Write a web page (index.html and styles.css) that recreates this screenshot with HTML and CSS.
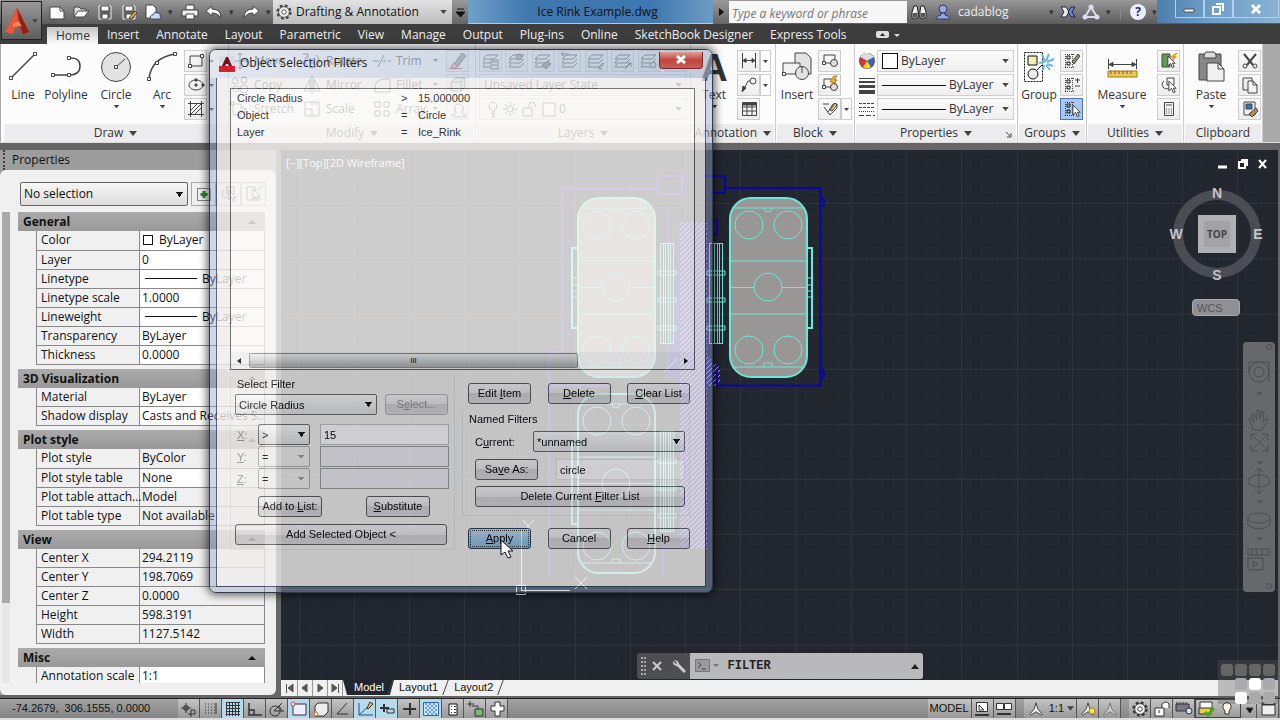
FILE: index.html
```
<!DOCTYPE html>
<html lang="en">
<head>
<meta charset="utf-8">
<title>Ice Rink Example.dwg</title>
<link rel="stylesheet" href="styles.css">
</head>
<body>
<svg class="defs" aria-hidden="true">
  <defs>
    <symbol id="dd" viewBox="0 0 8 5"><path d="M0 0h8L4 5z" fill="#444"/></symbol>
    <symbol id="rect" viewBox="0 0 20 20"><path d="M4 5h12v10H4z"/><path d="M2.500 13.500h3v3h-3zM14.500 3.500h3v3h-3z" fill="#fff"/></symbol>
    <symbol id="ellipse" viewBox="0 0 20 20"><ellipse cx="10" cy="10" rx="7" ry="5"/><path d="M9 9h2v2H9zM16 9h2v2h-2zM9 4h2v2H9z" fill="#444"/></symbol>
    <symbol id="hatch" viewBox="0 0 20 20"><path d="M2 4.500h16M4.500 2v16M2 15.500h16M15.500 2v16M5 11l6-6M5 15L15 5M9 15l6-6"/></symbol>
    <symbol id="move" viewBox="0 0 20 20"><path d="M10 2v16M2 10h16M8 4l2-2 2 2M8 16l2 2 2-2M4 8l-2 2 2 2M16 8l2 2-2 2"/></symbol>
    <symbol id="rotate" viewBox="0 0 20 20"><path d="M6 4a7 7 0 1 0 8 0M6 8V3h-5M9 9h3v3H9z"/></symbol>
    <symbol id="trim" viewBox="0 0 20 20"><path d="M1 10h6M11 10h3M16 10h3M6 16l6-12" stroke="#345"/></symbol>
    <symbol id="copy2" viewBox="0 0 20 20"><circle cx="5" cy="6" r="3"/><circle cx="14" cy="5" r="3"/><circle cx="6" cy="14" r="3"/><circle cx="14" cy="14" r="4"/></symbol>
    <symbol id="mirror" viewBox="0 0 20 20"><path d="M8 4v12H2zM12 4v12h6zM10 1v18"/></symbol>
    <symbol id="fillet" viewBox="0 0 20 20"><path d="M3 17V12Q4 4 13 4h5v13M3 17h15"/></symbol>
    <symbol id="stretch" viewBox="0 0 20 20"><path d="M3 5h8v11H3zM11 8l6 2-6 4M1 3h3v3H1z"/></symbol>
    <symbol id="scale" viewBox="0 0 20 20"><path d="M3 3h14v14H3zM3 10h7v7M10 3v3M14 3v3"/></symbol>
    <symbol id="array" viewBox="0 0 20 20"><path d="M3 3h5v5H3zM12 3h5v5h-5zM3 12h5v5H3zM12 12h5v5h-5z"/></symbol>
    <symbol id="layers" viewBox="0 0 20 20"><path d="M6 4h11l-4 4H2zM4 9l-2 3h11l4-4M4 13l-2 3h11l4-4"/></symbol>
    <symbol id="box" viewBox="0 0 20 20"><path d="M3 7h10v9H3zM3 7l4-4h10v9l-4 4M13 7l4-4" fill="#cde"/></symbol>
    <symbol id="offset" viewBox="0 0 20 20"><path d="M2 16h5q2-2 0-5-1-6 4-6t4 6q-2 3 0 5h4M5 18h14"/></symbol>
    <symbol id="erase" viewBox="0 0 20 20"><path d="M6 13L14 2l4 3-8 10z" fill="#8a8a90"/><path d="M6 12l-3 4 3 2 4-3z" fill="#e8b0a8"/><path d="M1 17.500h13" stroke="#a33"/></symbol>
    <symbol id="dim" viewBox="0 0 20 20"><path d="M3.500 2v15M16.500 2v15M4 9.500h12M4 9.500l3-2v4zM16 9.500l-3-2v4z" fill="#444"/></symbol>
    <symbol id="leader" viewBox="0 0 20 20"><circle cx="14" cy="6" r="3"/><path d="M11 6H9L4 16"/><path d="M3 17l1-6 3 2z" fill="#444"/></symbol>
    <symbol id="table" viewBox="0 0 20 20"><path d="M3.500 3.500h14v13h-14zM4 8h13M4 12h13M8 4v12M13 4v12"/><path d="M4 4h13v2H4z" fill="#444"/></symbol>
    <symbol id="edit" viewBox="0 0 20 20"><path d="M4 4h11v6M4 4v8h7" /><circle cx="14" cy="12" r="3.500" fill="#ddd"/><path d="M2.500 10.500h3v3h-3z" fill="#fff"/></symbol>
    <symbol id="attr" viewBox="0 0 20 20"><path d="M3 5h6M4 8l6 8 7-7V5l-4 0-5 8"/><path d="M10 11l5-7 2 2-5 6z" fill="#eec96b"/></symbol>
    <symbol id="arrow" viewBox="0 0 10 14"><path d="M1 1v11l3-3 2 5 2-1-2-4h3z" fill="#fff" stroke="#333"/></symbol>
    <symbol id="gear" viewBox="0 0 20 20"><circle cx="10" cy="10" r="7" stroke-dasharray="3 2.500" stroke-width="3"/><circle cx="10" cy="10" r="6" fill="#eee"/><circle cx="10" cy="10" r="2.500" fill="#fff"/></symbol>
    <symbol id="cursorgrp" viewBox="0 0 20 20"><path d="M3 3.500h9M3 16.500h9M3.500 3v14M10.500 3v14" stroke-dasharray="1 1"/><path d="M5 5h3v3H5zM5 11h3v3H5z" stroke="#111"/></symbol>
    <symbol id="man" viewBox="0 0 20 20"><path d="M10 3l2 7 5 6-1 1-6-4-6 4-1-1 5-6z" fill="#f4f4f4" stroke="#333"/></symbol>
    <symbol id="page" viewBox="0 0 20 20"><path d="M3 3h9v12H3z" fill="#eee"/><path d="M8 6h5l4 4v8H8zM13 6v4h4" fill="#f4f4f4"/></symbol>
  </defs>
</svg>
<div class="app">
  <header class="titlebar">
    <button class="appbtn" aria-label="Application menu"><svg width="24" height="26" viewBox="0 0 24 26"><path d="M12 0L0 24l8 2 4-9 6 9 6-2z" fill="#c2341d"/><path d="M12 0L0 24l8 2 5-14z" fill="#e4593a"/><path d="M12 0l6 26 6-2z" fill="#8f1f12"/><path d="M8 16l5-3 4 5-9 1z" fill="#f0845f"/></svg><svg class="dd" width="6" height="4"><use href="#dd"/></svg></button>
    <nav class="qat">
      <button aria-label="New"><svg viewBox="0 0 18 18"><path d="M2 4h10l4 4v8H2z" fill="#fff"/><path d="M12 4v4h4"/></svg></button>
      <button aria-label="Open"><svg viewBox="0 0 18 18"><path d="M2 14V4h5l2 2h5v3" fill="#ddd"/><path d="M2 14l4-6h11l-5 6z" fill="#fff"/></svg></button>
      <button aria-label="Save"><svg viewBox="0 0 18 18"><path d="M3 3h12v13H3z" fill="#666" stroke="#eee"/><path d="M5 3h8v5H5zM6 11h6v5H6z" fill="#fff"/></svg></button>
      <button aria-label="Save as"><svg viewBox="0 0 18 18"><path d="M3 3h12v13H3z" fill="#666" stroke="#eee"/><path d="M5 3h8v5H5zM6 11h6v5H6z" fill="#fff"/><path d="M9 15l6-7 2 2-6 6z" fill="#e7a93c"/></svg></button>
      <button aria-label="Cloud"><svg viewBox="0 0 18 18"><path d="M2 2h7l3 3v10H2z" fill="#fff"/><path d="M7 16q-2-4 2-4 1-4 4-2 4 0 3 3 2 3-2 3z" fill="#cfe0f4" stroke="#447"/></svg></button>
      <i>▾</i>
      <button aria-label="Print"><svg viewBox="0 0 18 18"><path d="M5 2h8v5H5z" fill="#fff"/><path d="M1 7h16v6H1z" fill="#eee"/><path d="M5 11h8v5H5z" fill="#fff"/></svg></button>
      <button aria-label="Undo"><svg viewBox="0 0 18 18"><path d="M1 8l6-5v3q9 0 9 9-3-5-9-5v3z" fill="#fff"/></svg></button>
      <i>▾</i>
      <button aria-label="Redo"><svg viewBox="0 0 18 18"><path d="M17 8l-6-5v3q-9 0-9 9 3-5 9-5v3z" fill="#fff"/></svg></button>
      <i>▾</i>
    </nav>
    <button class="workspace"><svg class="ic" width="18" height="18"><use href="#gear"/></svg><span>Drafting &amp; Annotation</span><svg width="7" height="4"><use href="#dd"/></svg></button>
    <button class="qmore" aria-label="Customize"><svg width="9" height="9" viewBox="0 0 9 9"><path d="M1 1h7M0 4h9L4.500 9z" stroke="#111" fill="#111"/></svg></button>
    <h1 class="doc">Ice Rink Example.dwg</h1>
    <button class="qmore" aria-label="Expand search"><svg width="5" height="8" viewBox="0 0 5 8"><path d="M0 0l5 4-5 4z" fill="#111"/></svg></button>
    <input class="search" aria-label="Search" placeholder="Type a keyword or phrase">
    <div class="account">
      <svg width="18" height="18" viewBox="0 0 18 18"><path d="M2 15V9l2-6h3l1 5v7zM10 15V8l1-5h3l2 6v6z" fill="#eee" stroke="#222"/><path d="M3 10h4v4H3zM11 10h4v4h-4z" fill="#555"/></svg>
      <svg width="18" height="18" viewBox="0 0 18 18"><circle cx="9" cy="6" r="4" fill="#9aa7e0" stroke="#2d3676"/><path d="M2 16q0-3 5-4v-2h4v2q5 1 5 4z" fill="#9aa7e0" stroke="#2d3676"/></svg>
      <span>cadablog</span><i>▾</i>
      <svg width="16" height="16" viewBox="0 0 16 16"><path d="M1 3h5l3 5-3 5H1l3-5z" fill="#eee" stroke="#224"/><path d="M15 3h-4L8 8l3 5h4l-3-5z" fill="#6f7fd0" stroke="#224"/></svg>
      <svg width="18" height="18" viewBox="0 0 18 18"><path d="M9 4l6 10H3z" fill="none" stroke="#dde" stroke-width="2"/><circle cx="9" cy="4" r="2.500" fill="#dde"/><circle cx="3" cy="14" r="2.500" fill="#dde"/><circle cx="15" cy="14" r="2.500" fill="#dde"/></svg>
      <i>▾</i><b class="sep"></b>
      <button class="help">?</button><i>▾</i>
    </div>
    <div class="winbtns">
      <button aria-label="Minimize"><svg width="12" height="12" viewBox="0 0 12 12"><path d="M1 6h10v3H1z" fill="#fff" stroke="#456"/></svg></button>
      <button aria-label="Restore"><svg width="12" height="12" viewBox="0 0 12 12"><path d="M4 1h7v7M1 4h7v7H1z" fill="none" stroke="#fff" stroke-width="2"/></svg></button>
      <button class="wide" aria-label="Close"><svg width="12" height="12" viewBox="0 0 12 12"><path d="M2 2l8 8M10 2l-8 8" stroke="#fff" stroke-width="3"/></svg></button>
    </div>
  </header>
  <nav class="tabs">
    <button class="on">Home</button><button>Insert</button><button>Annotate</button><button>Layout</button><button>Parametric</button><button>View</button><button>Manage</button><button>Output</button><button>Plug-ins</button><button>Online</button><button>SketchBook Designer</button><button>Express Tools</button>
    <button class="mini" aria-label="Minimize ribbon"><svg width="26" height="8" viewBox="0 0 26 8"><rect width="13" height="7" rx="2" fill="#ddd"/><path d="M4 5l2.500-3L9 5z" fill="#222"/><path d="M18 3h6l-3 3z" fill="#ddd"/></svg></button>
  </nav>
  <div class="ribbon">
    <section class="panel draw">
      <div class="body">
        <button class="big w40"><svg width="30" height="32" viewBox="0 0 30 32"><path d="M3 28L27 4" stroke-width="1.500"/><path d="M1.500 26.500h3v3h-3zM25.500 2.500h3v3h-3z" fill="#fff"/></svg>Line</button>
        <button class="big w46"><svg width="32" height="32" viewBox="0 0 32 32"><path d="M2 25h17M19 8q11-1 11 8t-11 9" stroke-width="1.500"/><path d="M1.500 23.500h3v3h-3zM17.500 23.500h3v3h-3zM17.500 6.500h3v3h-3z" fill="#fff"/></svg>Polyline</button>
        <button class="big w54"><svg width="32" height="32" viewBox="0 0 32 32"><circle cx="16" cy="17" r="14.500" fill="#e2e2e2"/><path d="M16 17l9-8"/><path d="M14.500 15.500h3v3h-3z" fill="#fff"/></svg>Circle<svg class="dd" width="5" height="3"><use href="#dd"/></svg></button>
        <button class="big w38"><svg width="32" height="32" viewBox="0 0 32 32"><path d="M3 29Q5 8 29 4" stroke-width="1.500"/><path d="M1.500 27.500h3v3h-3zM9.500 11.500h3v3h-3zM27.500 2.500h3v3h-3z" fill="#fff"/></svg>Arc<svg class="dd" width="5" height="3"><use href="#dd"/></svg></button>
        <div class="col m3">
          <div class="row"><button class="sm" aria-label="Rectangle"><svg><use href="#rect"/></svg></button><svg class="dd" width="5" height="3"><use href="#dd"/></svg></div>
          <div class="row"><button class="sm" aria-label="Ellipse"><svg><use href="#ellipse"/></svg></button><svg class="dd" width="5" height="3"><use href="#dd"/></svg></div>
          <div class="row"><button class="sm" aria-label="Hatch"><svg><use href="#hatch"/></svg></button><svg class="dd" width="5" height="3"><use href="#dd"/></svg></div>
        </div>
      </div>
      <button class="cap">Draw <svg width="8" height="5"><use href="#dd"/></svg></button>
    </section>
    <section class="panel modify">
      <div class="body">
        <div class="grid3">
          <button><svg><use href="#move"/></svg>Move</button><button><svg><use href="#rotate"/></svg>Rotate</button><button><svg><use href="#trim"/></svg>Trim</button>
          <button><svg><use href="#copy2"/></svg>Copy</button><button><svg><use href="#mirror"/></svg>Mirror</button><button><svg><use href="#fillet"/></svg>Fillet</button>
          <button><svg><use href="#stretch"/></svg>Stretch</button><button><svg><use href="#scale"/></svg>Scale</button><button><svg><use href="#array"/></svg>Array</button>
        </div>
        <div class="col dds"><svg class="dd" width="5" height="3"><use href="#dd"/></svg><svg class="dd" width="5" height="3"><use href="#dd"/></svg><svg class="dd" width="5" height="3"><use href="#dd"/></svg></div>
        <div class="col"><button class="sm" aria-label="Erase"><svg><use href="#erase"/></svg></button><button class="sm" aria-label="Explode"><svg><use href="#box"/></svg></button><button class="sm" aria-label="Offset"><svg><use href="#offset"/></svg></button></div>
      </div>
      <button class="cap">Modify <svg width="8" height="5"><use href="#dd"/></svg></button>
    </section>
    <section class="panel layers">
      <div class="body col">
        <div class="row spread">
          <button class="sm" aria-label="Layer properties"><svg><use href="#layers"/><path d="M10 9h7v9h-7zM11 11h5M11 14h5" fill="#eee"/></svg></button>
          <button class="sm" aria-label="Make current"><svg><use href="#layers"/><circle cx="12" cy="6" r="3" fill="#79b"/></svg></button>
          <button class="sm" aria-label="Match"><svg><use href="#layers"/><path d="M9 14l6-4 3 3-5 5z" fill="#876"/></svg></button>
          <button class="sm" aria-label="Previous"><svg><use href="#layers"/><path d="M1 3h8M1 3l3-2M1 3l3 2"/></svg></button>
          <button class="sm" aria-label="Isolate"><svg><use href="#layers"/><path d="M18 12l-5 6M13 15v3h3"/></svg></button>
          <button class="sm" aria-label="Unisolate"><svg><use href="#layers"/><path d="M12 18l6-6M14 12h4v4"/></svg></button>
          <button class="sm" aria-label="Freeze"><svg><use href="#layers"/><circle cx="14" cy="14" r="3" fill="#ddd"/></svg></button>
          <button class="sm" aria-label="Off"><svg><use href="#layers"/></svg></button>
        </div>
        <button class="combo">Unsaved Layer State<svg width="7" height="4"><use href="#dd"/></svg></button>
        <button class="combo l3"><svg class="ic" width="72" height="20" viewBox="0 0 72 20"><path d="M8 16v-4q-4-3-3-6 4-6 8 0 1 3-3 6v4zM8 18h3"/><circle cx="26" cy="10" r="3"/><path d="M26 3v3M26 14v3M19 10h3M30 10h3M21 5l2 2M31 5l-2 2M21 15l2-2M31 15l-2-2M39 9h9v8h-9zM45 9V5q3-4 6 0v3"/><rect x="59" y="4" width="12" height="13" fill="#fff"/></svg><span>0</span><svg width="7" height="4"><use href="#dd"/></svg></button>
      </div>
      <button class="cap">Layers <svg width="8" height="5"><use href="#dd"/></svg></button>
    </section>
    <section class="panel annot">
      <div class="body">
        <button class="big w46 bigA"><b>A</b>Text<svg class="dd" width="5" height="3"><use href="#dd"/></svg></button>
        <div class="col">
          <div class="row"><button class="sm" aria-label="Dimension"><svg><use href="#dim"/></svg></button><button class="drop" aria-label="More"><svg class="dd" width="5" height="3"><use href="#dd"/></svg></button></div>
          <div class="row"><button class="sm" aria-label="Leader"><svg><use href="#leader"/></svg></button><button class="drop" aria-label="More"><svg class="dd" width="5" height="3"><use href="#dd"/></svg></button></div>
          <button class="sm" aria-label="Table"><svg><use href="#table"/></svg></button>
        </div>
      </div>
      <button class="cap">Annotation <svg width="8" height="5"><use href="#dd"/></svg></button>
    </section>
    <section class="panel block">
      <div class="body">
        <button class="big w42"><svg width="32" height="32" viewBox="0 0 32 32"><path d="M14 3h11l5 5v16H14z" fill="#e2e2e2"/><path d="M2 13h17v11H2z" fill="#f2f2f2"/><circle cx="21" cy="23" r="6.500" fill="#e2e2e2"/><path d="M21 16v7M1.500 22.500h3v3h-3z" fill="#fff"/></svg>Insert</button>
        <div class="col"><button class="sm" aria-label="Create block"><svg><use href="#edit"/></svg></button><button class="sm" aria-label="Edit block"><svg><use href="#edit"/><path d="M14 1l-4 6h3l-2 4 6-6h-3l3-4z" fill="#f2b632" stroke="#b88010"/></svg></button><div class="row"><button class="sm" aria-label="Attributes"><svg><use href="#attr"/></svg></button><button class="drop" aria-label="More"><svg class="dd" width="5" height="3"><use href="#dd"/></svg></button></div></div>
      </div>
      <button class="cap">Block <svg width="8" height="5"><use href="#dd"/></svg></button>
    </section>
    <section class="panel props">
      <div class="body">
        <div class="col pics">
          <svg viewBox="0 0 16 22"><circle cx="8" cy="11" r="8" fill="#555" stroke="none"/><path d="M8 11L1 7q6-8 14 0z" fill="#ddd" stroke="none"/><path d="M8 11L1 7q-1 7 3 10z" fill="#d33" stroke="none"/><path d="M8 11l7-4q1 7-3 10z" fill="#36b" stroke="none"/><path d="M8 11l-4 6q4 3 8 0z" fill="#fc3" stroke="none"/></svg>
          <svg viewBox="0 0 16 22"><path d="M0 4.500h16"/><path d="M0 8h16" stroke-width="2"/><path d="M0 12.500h16" stroke-width="3"/><path d="M0 18h16" stroke-width="4"/></svg>
          <svg viewBox="0 0 16 22"><path d="M0 5.500h16M0 9.500h16" stroke-dasharray="3 1"/><path d="M0 13.500h16" stroke-dasharray="1 1"/><path d="M0 17.500h16" stroke-dasharray="5 2"/></svg>
        </div>
        <div class="col grow">
          <button class="combo"><u class="sw"></u><span>ByLayer</span><svg width="7" height="4"><use href="#dd"/></svg></button>
          <button class="combo"><u class="ln"></u><span>ByLayer</span><svg width="7" height="4"><use href="#dd"/></svg></button>
          <button class="combo"><u class="ln"></u><span>ByLayer</span><svg width="7" height="4"><use href="#dd"/></svg></button>
        </div>
      </div>
      <button class="cap">Properties <svg width="8" height="5"><use href="#dd"/></svg><svg class="launch" width="6" height="6" viewBox="0 0 6 6"><path d="M0 0l4 4M5 1v4H1" fill="none" stroke="#444"/></svg></button>
    </section>
    <section class="panel groups">
      <div class="body">
        <button class="big w42"><svg width="32" height="32" viewBox="0 0 32 32"><path d="M1.500 2.500h18v29h-18z" stroke="#111" stroke-dasharray="2 1"/><path d="M5 6h9v9H5z" fill="#f3efb0" stroke="#111"/><circle cx="10" cy="24" r="5" fill="#eee" stroke="#111"/><path d="M14 20l5-5" stroke="#111"/><path d="M22 12l-6 1M22 12l-3-8M23 11l3-7M24 12l7-3M24 14l6 2M23 15l4 5M21 15l-1 5" stroke="#6db4dc" stroke-width="2"/></svg>Group</button>
        <div class="col"><button class="sm" aria-label="Ungroup"><svg><use href="#cursorgrp"/><path d="M10 11l6-8 2 2-6 8z" fill="#897"/></svg></button><button class="sm" aria-label="Group edit"><svg><use href="#cursorgrp"/><path d="M13 5h5M15.500 3v5M13 11h5"/></svg></button><button class="sm sel" aria-label="Group selection"><svg><use href="#cursorgrp"/><use href="#arrow" x="10" y="5" width="9" height="13"/></svg></button></div>
      </div>
      <button class="cap">Groups <svg width="8" height="5"><use href="#dd"/></svg></button>
    </section>
    <section class="panel utils">
      <div class="body">
        <button class="big w70"><svg width="32" height="32" viewBox="0 0 32 32"><path d="M2.500 9v10M30.500 9v10M3 14.500h27M3 14.500l4-2v4zM30 14.500l-4-2v4z" fill="#333"/><path d="M2 21h29v6H2z" fill="#ecc94b" stroke="#9a7a1a"/><path d="M5 21v3M9 21v3M13 21v3M17 21v3M21 21v3M25 21v3" stroke="#654"/></svg>Measure<svg class="dd" width="5" height="3"><use href="#dd"/></svg></button>
        <div class="col"><button class="sm" aria-label="Quick select"><svg><path d="M3 3h8v13H3z" fill="#5c9e4e"/><path d="M18 2l-5 4h3l-3 4" stroke="#d9a51c" stroke-width="2"/><use href="#arrow" x="8" y="4" width="9" height="13"/></svg></button><button class="sm" aria-label="Select all"><svg><path d="M8 3h7v7H8zM5 6a4 4 0 1 0 5 7"/><use href="#arrow" x="9" y="5" width="9" height="13"/></svg></button><button class="sm" aria-label="Calculator"><svg><path d="M5.500 3.500h9v13h-9zM7 6h6M7 10h1M9.500 10h1M12 10h1M7 12h1M9.500 12h1M12 12h1M7 14h1M9.500 14h1M12 14h1"/></svg></button></div>
      </div>
      <button class="cap">Utilities <svg width="8" height="5"><use href="#dd"/></svg></button>
    </section>
    <section class="panel clip">
      <div class="body">
        <button class="big w54"><svg width="32" height="32" viewBox="0 0 32 32"><path d="M4 4h22v26H4z" fill="#888"/><path d="M9 5l2-3h8l2 3v3H9z" fill="#ddd"/><path d="M12 13h11l6 6v12H12z" fill="#f0f0f0"/><path d="M23 13v6h6"/></svg>Paste<svg class="dd" width="5" height="3"><use href="#dd"/></svg></button>
        <div class="col"><button class="sm" aria-label="Cut"><svg><path d="M4 3l9 11M16 3L7 14" stroke-width="2"/><circle cx="5" cy="15" r="2"/><circle cx="15" cy="15" r="2"/></svg></button><button class="sm" aria-label="Copy"><svg><use href="#page"/></svg></button><button class="sm" aria-label="Match"><svg><path d="M4 3h11v13H4z" fill="#eee"/><path d="M6 5h6v5H6z" fill="#37a"/><path d="M9 15l7-6 2 3-6 6z" fill="#b58a50"/></svg></button></div>
      </div>
      <button class="cap">Clipboard</button>
    </section>
  </div>
  <main class="work">
    <aside class="palette">
      <h2>Properties</h2>
      <div class="pbody">
        <div class="pick">
          <select aria-label="Selection"><option>No selection</option></select>
          <button aria-label="Pickadd"><svg viewBox="0 0 20 20"><path d="M3.500 4.500h13v12h-13z" stroke-dasharray="1 1" stroke="#111"/><path d="M10 7v7M6.500 10.500h7" stroke="#2a8a2a" stroke-width="3"/></svg></button><button aria-label="Select objects"><svg viewBox="0 0 20 20"><path d="M8 3h7v7H8zM5 6a4 4 0 1 0 5 7"/><use href="#arrow" x="9" y="5" width="9" height="13"/></svg></button><button aria-label="Quick select"><svg viewBox="0 0 20 20"><path d="M3 3h8v13H3zM18 2l-5 4"/><use href="#arrow" x="8" y="4" width="9" height="13"/></svg></button>
        </div>
        <div class="plist">
          <div class="pscroll"></div>
          <div class="psecs">
            <h3>General<i></i></h3>
            <table><tr><th>Color<td class="w"><u class="csw"></u>ByLayer<tr><th>Layer<td class="w">0<tr><th>Linetype<td class="w"><u class="pl"></u>ByLayer<tr><th>Linetype scale<td class="w">1.0000<tr><th>Lineweight<td class="w"><u class="pl"></u>ByLayer<tr><th>Transparency<td class="w">ByLayer<tr><th>Thickness<td class="w">0.0000</table>
            <h3>3D Visualization<i></i></h3>
            <table><tr><th>Material<td class="w">ByLayer<tr><th>Shadow display<td class="w">Casts and Receives S...</table>
            <h3>Plot style<i></i></h3>
            <table><tr><th>Plot style<td>ByColor<tr><th>Plot style table<td class="w">None<tr><th>Plot table attach...<td>Model<tr><th>Plot table type<td>Not available</table>
            <h3>View<i></i></h3>
            <table><tr><th>Center X<td>294.2119<tr><th>Center Y<td>198.7069<tr><th>Center Z<td>0.0000<tr><th>Height<td>598.3191<tr><th>Width<td>1127.5142</table>
            <h3>Misc<i></i></h3>
            <table><tr><th>Annotation scale<td class="w">1:1</table>
          </div>
        </div>
      </div>
    </aside>
    <div class="view">
      <div class="canvas">
        <svg class="drawing" width="997" height="530" viewBox="281 150 997 530">
          <defs>
            <pattern id="minor" x="299" y="203" width="11" height="11" patternUnits="userSpaceOnUse"><path d="M0 .5h11M.5 0v11" stroke="#242831"/></pattern>
            <pattern id="hat" width="5" height="5" patternUnits="userSpaceOnUse"><path d="M0 5l5-5" stroke="#b9b9c4"/></pattern>
            <g id="rink">
              <rect x="0" y="0" width="77" height="179" rx="21" stroke-width="2"/>
              <path d="M4 10h69M0 63h77M0 89.500h77M0 116h77M4 169h69M34 10a4 4 0 0 0 8 0M34 169v-4h8v4"/>
              <circle cx="19" cy="27" r="14"/><circle cx="58" cy="27" r="14"/><circle cx="38" cy="89" r="14"/><circle cx="19" cy="152" r="14"/><circle cx="58" cy="152" r="14"/>
            </g>
            <g id="seats"><path d="M.5 0v101M3.500 0v101M5.500 0v101M8.500 0v101M10.500 0v101M13.500 0v101M0 .5h14M0 100.500h14M-2 28h18v4h-18zM-2 55h18v4h-18zM-2 83h18v4h-18z"/></g>
          </defs>
          <rect x="281" y="150" width="997" height="530" fill="url(#minor)"/>
          <path d="M299.500 150v530M354.500 150v530M409.500 150v530M464.500 150v530M519.500 150v530M575.500 150v530M630.500 150v530M685.500 150v530M740.500 150v530M796.500 150v530M851.500 150v530M906.500 150v530M961.500 150v530M1017.500 150v530M1072.500 150v530M1127.500 150v530M1182.500 150v530M1237.500 150v530M281 203.500h997M281 258.500h997M281 314.500h997M281 369.500h997M281 424.500h997M281 479.500h997M281 534.500h997M281 645.500h997" stroke="#2e323a"/>
          <path d="M281 589.500h997" stroke="#4d293a"/>
          <path d="M680 222h27v134l13 12v18h-13v163h-27V385l-11-9z" fill="#21188f" stroke="none"/><path d="M680 222h27v134l13 12v18h-13v163h-27z" fill="url(#hat)"/>
          <path d="M562 352V188.500h96V176h24v18h-24M549 578V352h13M549 386h60M668 210v170M663 578v-30h17" fill="none" stroke="#3b20c8" stroke-width="2"/>
          <path d="M700 176h25v17h-15M725 188h95.500v197.500H717V372M711 220h6v14h-6M821 198q3 0 3 4t-3 5M821 369q3 1 3 5t-3 5" fill="none" stroke="#0a05a8" stroke-width="2"/>
          <g fill="none" stroke="#6ce8d8">
            <use href="#rink" x="578" y="198" fill="#999696"/><use href="#rink" x="730" y="198" fill="#999696"/><use href="#rink" x="578" y="394"/>
            <use href="#seats" x="660" y="243"/><use href="#seats" x="709" y="243"/><use href="#seats" x="660" y="431"/>
            <path d="M577 248h-5v80h5M807 248h5v80h-5M577 444h-5v80h5" stroke-width="2"/><path d="M572 278h5M572 285h5M572 291h5M572 297h5M807 278h5M807 285h5M807 291h5M807 297h5M664 372l14-14"/>
          </g>
          <path d="M521.500 590V530M521 590.500h49M516.500 585.500h9v9h-9zM523 520l5 6 6-6M528 526v5M575 577l12 12M587 577l-12 12" fill="none" stroke="#fff"/>
        </svg>
        <span class="vlabel">[−][Top][2D Wireframe]</span>
        <div class="mdi"><svg width="50" height="12" viewBox="0 0 50 12"><path d="M0 9h9" stroke="#fff" stroke-width="3"/><path d="M21 4h6v6h-6zM23 2h6v6" fill="none" stroke="#fff" stroke-width="2"/><path d="M41 2l7 8M48 2l-7 8" stroke="#fff" stroke-width="2"/></svg></div>
        <div class="cube"><span class="n">N</span><span class="w">W</span><button>TOP</button><span class="e">E</span><span class="s">S</span></div>
        <button class="wcs">WCS</button>
        <div class="navbar"><svg width="32" height="250" viewBox="0 0 32 250"><g fill="none" stroke="#4b4d51"><circle cx="26" cy="5" r="2.500"/><circle cx="16" cy="30" r="10"/><circle cx="16" cy="30" r="5"/><path d="M6 30V20h20v20M14 51h5l-2 2zM9 84l-3-7 2-1 3 4-2-8 2-1 3 7V68h2l1 9 2-8 2 1-1 10 4-4 1 2-6 10h-9zM8 92l17 17M25 92L8 109M8 98v-6h6M19 92h6v6M8 103v6h6M19 109h6v-6M14 120h5l-2 2zM16 126v26M12 130l4-4 4 4M12 148l4 4 4-4"/><ellipse cx="16" cy="139" rx="11" ry="6"/><path d="M14 159h5l-2 2z"/><ellipse cx="16" cy="176" rx="11" ry="5"/><path d="M5 176v7q11 8 22 0v-7M14 196h5l-2 2zM5 207h21v6H5zM9 207v6M14 207v6M19 207v6M5 216h15v12H5zM10 219l5 3-5 3z"/><circle cx="26" cy="244" r="2.500"/></g></svg></div>
        <div class="cmd">
          <span class="grip"></span>
          <button aria-label="Close"><svg width="12" height="12" viewBox="0 0 12 12"><path d="M2 2l8 8M10 2l-8 8" stroke="#ccc" stroke-width="2"/></svg></button>
          <button aria-label="Customize"><svg width="14" height="14" viewBox="0 0 14 14"><path d="M5 5l8 8" stroke="#ccc" stroke-width="3"/><path d="M2 1l3 3-1 1-3-3q-1 5 5 5 3-5-4-6z" fill="#ccc"/></svg></button>
          <label><svg width="24" height="14" viewBox="0 0 24 14"><path d="M.5 .5h14v12H.5z" fill="#9b9b9d" stroke="#777"/><path d="M3 3l3 3-3 3M7 10h4" stroke="#444" fill="none"/><path d="M18 5h6l-3 3z" fill="#777"/></svg><input aria-label="Command" value="FILTER"><svg width="8" height="5" viewBox="0 0 8 5"><path d="M0 5l4-5 4 5z" fill="#222"/></svg></label>
        </div>
      </div>
      <nav class="ltabs">
        <button class="nv" aria-label="First"><svg viewBox="0 0 10 10"><path d="M1.500 1v9M8 1v8L3 5z"/></svg></button><button class="nv" aria-label="Previous"><svg viewBox="0 0 10 10"><path d="M7 1v8L2 5z"/></svg></button><button class="nv" aria-label="Next"><svg viewBox="0 0 10 10"><path d="M3 1v8l5-4z"/></svg></button><button class="nv" aria-label="Last"><svg viewBox="0 0 10 10"><path d="M8.500 1v9M2 1v8l5-4z"/></svg></button>
        <button class="lt model">Model</button><button class="lt">Layout1</button><button class="lt">Layout2</button>
      </nav>
    </div>
  </main>
  <footer class="status">
    <output>-74.2679, &nbsp;306.1555, 0.0000</output>
    <div class="sbtns">
      <button aria-label="Infer"><svg viewBox="0 0 20 18"><path d="M2 8h10M7 3v10M5 6h4v4H5zM12 10h4v4h-4zM9 14h3v3"/></svg></button><button aria-label="Snap"><svg viewBox="0 0 20 18"><path d="M4 4h10M4 7h10M4 10h10M4 13h10" stroke-dasharray="1 2"/><path d="M15 3v11"/></svg></button><button class="on" aria-label="Grid"><svg viewBox="0 0 20 18"><path d="M3.500 2v14M6.500 2v14M9.500 2v14M12.500 2v14M15.500 2v14M3 2.500h14M3 5.500h14M3 8.500h14M3 11.500h14M3 14.500h14"/></svg></button><button aria-label="Ortho"><svg viewBox="0 0 20 18"><path d="M4 3v12h13M4 10h5v5" stroke-width="1.500"/></svg></button><button aria-label="Polar"><svg viewBox="0 0 20 18"><circle cx="8" cy="11" r="5"/><path d="M15 3l-8 8h10M12 6l3 5"/></svg></button><button class="on" aria-label="Osnap"><svg viewBox="0 0 20 18"><path d="M4 4h13v11H4z" fill="#eef"/><circle cx="4" cy="4" r="2" fill="#fff" stroke="#b44"/></svg></button><button aria-label="3D osnap"><svg viewBox="0 0 20 18"><path d="M4 6l3-3h10v9l-4 4H4z" fill="#eee"/><circle cx="5" cy="14" r="2" fill="#fff" stroke="#c62"/></svg></button><button aria-label="Otrack"><svg viewBox="0 0 20 18"><path d="M14 3L4 14h11"/></svg></button><button class="on" aria-label="Ducs"><svg viewBox="0 0 20 18"><path d="M4 3v12h14M4 15L14 6" stroke="#257"/><path d="M12 8l3-6 3 2-5 5z" fill="#eb4"/></svg></button><button class="on" aria-label="Dyn"><svg viewBox="0 0 20 18"><path d="M3 8h9M7 4v8" stroke-width="2"/><path d="M10 9h7v4h-7z"/></svg></button><button aria-label="Lineweight"><svg viewBox="0 0 20 18"><path d="M4 9h13" stroke-width="2"/><path d="M11 3v12" stroke-width="2"/></svg></button><button class="on" aria-label="Transparency"><svg viewBox="0 0 20 18"><path d="M2.500 2.500h15v13h-15z" fill="#cfe4f5" stroke="#36a"/><path d="M4 4h12M4 8h12M4 12h12" stroke="#6aa2d4" stroke-width="2" stroke-dasharray="2 2"/><path d="M6 6h10M6 10h10M6 14h10" stroke="#6aa2d4" stroke-width="2" stroke-dasharray="2 2"/></svg></button><button aria-label="Quick properties"><svg viewBox="0 0 20 18"><path d="M6 4h8v11H6z" fill="#fff" stroke="#111"/><path d="M8 6.500h1M11 6.500h2M8 9.500h1M11 9.500h2M8 12.500h1M11 12.500h2"/></svg></button><button aria-label="Cycling"><svg viewBox="0 0 20 18"><path d="M2 4h7M5 1v6M7 6h6v7" /><path d="M10 9h8v7h-8z" fill="#7db870"/></svg></button><button aria-label="Monitor"><svg viewBox="0 0 20 18"><path d="M8 2h5v4h4v5h-4v5H8v-5H4V6h4z" fill="#fff"/></svg></button>
    </div>
    <div class="sbtns right">
      <button class="txt">MODEL</button><button aria-label="Layout"><svg viewBox="0 0 20 18"><path d="M4.500 2.500h11v9h-11z" fill="#fff"/><path d="M7 5v5h5z"/><path d="M3 15h14" stroke-width="2"/></svg></button><button aria-label="Quick view"><svg viewBox="0 0 20 18"><path d="M2.500 3.500h7v6h-7zM10.500 3.500h7v6h-7z" fill="#fff"/><path d="M3 14h14" stroke-width="2"/></svg></button>
      <button class="txt g"><svg class="ic" viewBox="0 0 20 18"><use href="#man"/></svg>1:1<svg width="7" height="5"><use href="#dd"/></svg></button><button aria-label="Annotation visibility"><svg viewBox="0 0 20 18"><use href="#man"/><circle cx="14" cy="11" r="3" fill="#fd6" stroke="#a80"/></svg></button><button aria-label="Auto scale"><svg viewBox="0 0 20 18" opacity=".5"><use href="#man"/></svg></button>
      <button class="g" aria-label="Workspace"><svg viewBox="0 0 20 18"><use href="#gear"/></svg></button><button aria-label="Lock"><svg viewBox="0 0 20 18"><path d="M3 8h9v8H3zM10 8V4q4-4 7 0v4M7 10v3" fill="#fff"/></svg></button><button aria-label="Hardware"><svg viewBox="0 0 20 18"><path d="M2 4h13v7H2zM3 2v2M6 2v2M9 2v2M12 2v2" fill="#778"/><circle cx="15" cy="11" r="3" fill="#cdf"/></svg></button>
      <button class="tray" aria-label="Tray"><svg viewBox="0 0 44 18"><path d="M4 2h12v7H4z" fill="#fff"/><path d="M3 8h12v6H3z" fill="#ec4"/><path d="M9 12l3 3 6-7" stroke="#4a2" stroke-width="3"/><path d="M29 14v-3q-3-3-2-6 4-5 8 0 1 3-2 6v3z" fill="#ffd"/></svg></button><button class="slim" aria-label="Menu"><svg viewBox="0 0 10 18"><path d="M2 8h7l-3 5z" fill="#111"/></svg></button><button aria-label="Clean screen"><svg viewBox="0 0 20 18"><path d="M4 3h13v12H4z" fill="#eee"/><path d="M4 4h13" stroke-width="3"/></svg></button>
    </div>
  </footer>

  <div class="mark"><i></i><i></i><i></i><i></i><i class="x"></i><i class="b"></i><i class="c"></i><i class="b"></i><i class="x"></i><i class="c"></i><i class="b"></i><i class="b"></i></div>

  <div class="dialog" role="dialog" aria-label="Object Selection Filters">
    <div class="dtitle"><svg width="16" height="16" viewBox="0 0 16 16"><path d="M0 0h16v10H0z" fill="#d8dbe2"/><path d="M0 10h16v6H0z" fill="#d4202f"/><path d="M3 10l4-9h2l4 9h-3l-1-2H7l-1 2z" fill="#701018"/></svg><span>Object Selection Filters</span><button aria-label="Close"><svg width="10" height="9" viewBox="0 0 10 9"><path d="M1 1l8 7M9 1L1 8" stroke="#fff" stroke-width="3"/></svg></button></div>
    <div class="client">
      <div class="list">
        <table><tr><td>Circle Radius<td>&gt;<td>15.000000<tr><td>Object<td>=<td>Circle<tr><td>Layer<td>=<td>Ice_Rink</table>
        <div class="hs"><svg width="5" height="6" viewBox="0 0 5 6"><path d="M4 0v6L0 3z"/></svg><span>III</span><svg width="5" height="6" viewBox="0 0 5 6"><path d="M1 0v6l4-3z"/></svg></div>
      </div>
      <div class="cols">
        <div class="left">
          <label for="f">Select Filter</label>
          <div class="r a"><select id="f"><option>Circle Radius</option></select><button disabled>S<u>e</u>lect...</button></div>
          <div class="r v"><label for="x"><u>X</u>:</label><select id="x"><option>&gt;</option></select><input value="15" aria-label="X value"></div>
          <div class="r v dis"><label for="y"><u>Y</u>:</label><select id="y"><option>=</option></select><input aria-label="Y value"></div>
          <div class="r v dis"><label for="z"><u>Z</u>:</label><select id="z"><option>=</option></select><input aria-label="Z value"></div>
          <div class="r pair"><button>Add to <u>L</u>ist:</button><button><u>S</u>ubstitute</button></div>
          <button class="full">Add Selected Object &lt;</button>
        </div>
        <div class="rightc">
          <div class="r tri"><button>Edit <u>I</u>tem</button><button><u>D</u>elete</button><button><u>C</u>lear List</button></div>
          <div class="named">
            <span>Named Filters</span>
            <div class="r cur"><label for="c">C<u>u</u>rrent:</label><select id="c"><option>*unnamed</option></select></div>
            <div class="r sav"><button>Sa<u>v</u>e As:</button><input value="circle" aria-label="Filter name"></div>
            <button class="full">Delete Current <u>F</u>ilter List</button>
          </div>
          <div class="r tri"><button class="def"><u>A</u>pply</button><button>Cancel</button><button><u>H</u>elp</button></div>
        </div>
      </div>
    </div>
  </div>
  <svg class="pointer" width="13" height="20" viewBox="0 0 13 20"><path d="M1 1v15l4-3 3 6 3-1-3-6h5z" fill="#fff" stroke="#111"/></svg>
</div>
</body>
</html>
```
FILE: styles.css
```
*, *::before, *::after { box-sizing: border-box; }
body { margin: 0; font: 12px/16px "Open Sans", "Noto Sans", sans-serif; color: #333; }
button, input, select { font: inherit; color: inherit; margin: 0; padding: 0; border: 0; background: none; border-radius: 0; }
select { appearance: none; }
svg { display: block; flex: none; }
i { font-style: normal; }
.defs { position: absolute; width: 0; height: 0; }
.app { position: relative; display: flex; flex-direction: column; height: 100vh; min-height: 720px; background: #666; overflow: hidden; }

.titlebar { display: flex; height: 24px; background: linear-gradient(#989898, #5c5c5c); position: relative; }
.appbtn { position: absolute; left: 1px; top: 1px; width: 41px; height: 39px; display: flex; align-items: center; justify-content: center; gap: 3px; border: 1px solid #222; background: linear-gradient(#999, #5e5e5e); z-index: 2; }
.qat { display: flex; align-items: center; gap: 6px; width: 273px; padding-left: 48px; }
.qat svg { width: 18px; height: 18px; fill: none; stroke: #444; }
.qat i { width: 8px; font-size: 9px; color: #333; }
.workspace { display: flex; align-items: center; gap: 3px; width: 179px; padding: 0 5px 0 2px; background: linear-gradient(#e2e2e2, #bdbdbd); color: #111; }
.workspace span { flex: 1; text-align: left; white-space: nowrap; }
.ic { fill: none; stroke: #444; }
.qmore { width: 16px; display: flex; align-items: center; justify-content: center; background: linear-gradient(#999, #666); }
.doc { flex: 1; margin: 0; font-size: 12px; font-weight: 400; line-height: 24px; padding-left: 14px; text-align: center; color: #111; background: linear-gradient(90deg, #6fa0c8, #3f78ae 25%, #3e78b0 75%, #6c9cc4); border-bottom: 1px solid #a9cbe4; }
.search { width: 178px; height: 22px; margin-top: 1px; padding: 2px 3px 0; background: #f6f6f6; font-style: italic; }
.search::placeholder { color: #777; opacity: 1; }
.account { width: 250px; display: flex; align-items: center; padding-left: 3px; gap: 6px; color: #f0f0f0; }
.account span { flex: 1; }
.account i { font-size: 9px; color: #333; }
.sep { width: 1px; height: 14px; margin: 0 3px; background: #888; }
.help { width: 16px; height: 16px; border-radius: 8px; background: #eef; color: #236; font-weight: 700; line-height: 16px; }
.winbtns { display: flex; width: 123px; height: 23px; padding: 0 1px 5px 18px; background: linear-gradient(90deg, #4d7fac, #6c9cc6 40%, #88b2d4); }
.winbtns button { flex: 28; display: flex; align-items: center; justify-content: center; border: 1px solid #b5d0e6; border-top: 0; }
.winbtns .wide { flex: 46; }

.tabs { display: flex; height: 20px; background: #3d3d3d; padding-left: 47px; color: #eee; white-space: nowrap; }
.tabs button { padding: 2px 8px 0 9px; line-height: 18px; }
.tabs .on { background: linear-gradient(#c4c4c4, #fbfbfb); color: #333; margin-top: 3px; padding-top: 0; line-height: 17px; }
.tabs .mini { padding-left: 22px; }

.ribbon { display: flex; height: 99px; background: #aaa; padding-left: 1px; margin-bottom: 7px; border-bottom: 1px solid #ddd; }
.panel { display: flex; flex-direction: column; background: #fcfcfd; border-right: 1px solid #ccc; }
.body { flex: 1; display: flex; padding-top: 6px; }
.cap { display: flex; align-items: center; justify-content: center; gap: 6px; height: 18px; margin: 0 1px; background: #ececee; white-space: nowrap; position: relative; }
.launch { position: absolute; right: 4px; bottom: 4px; }
.draw { width: 228px; padding-left: 2px; }
.modify { width: 247px; }
.layers { width: 215px; }
.annot { width: 85px; }
.block { width: 79px; }
.props { width: 163px; }
.groups { width: 69px; }
.utils { width: 97px; }
.clip { width: 79px; }
.big { display: flex; flex-direction: column; align-items: center; white-space: nowrap; height: 70px; }
.big svg { fill: none; stroke: #444; margin-bottom: 5px; }
.big .dd { margin: 2px 0 0; }
.dd { stroke: none; }
.bigA b { font: 700 38px/37px "Liberation Sans", sans-serif; height: 37px; }
.w40 { width: 40px; } .w46 { width: 46px; } .w54 { width: 54px; } .w38 { width: 38px; } .w42 { width: 42px; } .w70 { width: 70px; }
.m3 { margin-left: 3px; }
.col { display: flex; flex-direction: column; gap: 2px; }
.row { display: flex; align-items: center; gap: 2px; }
.spread { justify-content: space-between; }
.sm { width: 23px; height: 22px; border: 1px solid #cdcdd0; background: linear-gradient(#fafafa, #eee); display: flex; align-items: center; justify-content: center; }
.sm svg, .grid3 svg { width: 20px; height: 20px; fill: none; stroke: #444; }
.sm.sel { background: #a9c8f0; border-color: #4a76b8; }
.drop { width: 11px; height: 22px; border: 1px solid #cdcdd0; display: flex; align-items: center; justify-content: center; }
.annot .row, .block .row { gap: 0; }
.grid3 { display: grid; grid-template-columns: 72px 70px 62px; grid-auto-rows: 24px; }
.grid3 button { display: flex; align-items: center; gap: 4px; height: 22px; padding-left: 1px; }
.dds { padding-top: 9px; gap: 21px; width: 13px; }
.combo { display: flex; align-items: center; gap: 3px; height: 22px; padding: 0 4px; border: 1px solid #d0d0d4; background: linear-gradient(#fbfbfb, #efeff0); text-align: left; }
.combo > svg:last-child { margin-left: auto; }
.layers .body { padding: 6px 3px 0; }
.pics { padding-left: 4px; width: 22px; }
.pics svg { width: 16px; height: 22px; fill: none; stroke: #444; }
.grow { flex: 1; padding-right: 3px; }
.sw { width: 16px; height: 16px; border: 1px solid #111; background: #fff; }
.ln { width: 64px; border-top: 1px solid #111; }
.sw, .ln, .csw, .pl { text-decoration: none; }

.work { flex: 1; display: flex; min-height: 0; padding-right: 2px; gap: 5px; }
.palette { width: 276px; margin-bottom: 3px; background: #9d9d9d; border-radius: 0 3px 6px 0; display: flex; flex-direction: column; color: #111; }
.palette h2 { margin: 0 0 0 3px; font: inherit; line-height: 20px; padding-left: 7px; border-left: 2px dotted #444; }
.pbody { flex: 1; background: #f0f0f0; border-radius: 6px; padding-top: 12px; min-height: 0; display: flex; flex-direction: column; }
.pick { display: flex; padding: 0 10px 0 20px; height: 24px; margin-bottom: 6px; }
.pick select { flex: 1; border: 1px solid #666; border-radius: 2px; padding: 0 3px; margin-right: 3px; }
.pick button { width: 25px; border: 1px solid #aaa; }
.pick button svg { width: 20px; height: 20px; margin: auto; fill: none; stroke: #555; }
.pick select, .dialog select { background: conic-gradient(from -36deg at 50% 100%, #111 72deg, transparent 0) right 3px center / 9px 5px no-repeat, linear-gradient(#f7f7f7, #ddd); }
.plist { flex: 1; display: flex; gap: 8px; min-height: 0; padding: 0 11px 12px 2px; overflow: hidden; }
.pscroll { width: 8px; background: linear-gradient(#aaa 83%, #e8e8e8 0); }
.psecs { flex: 1; overflow: hidden; }
.psecs h3 { margin: 0; height: 19px; font-size: 12px; line-height: 19px; font-weight: 700; padding: 0 9px 0 5px; background: linear-gradient(#aaa, #999); display: flex; align-items: center; justify-content: space-between; }
.psecs h3 i { border: 4px solid transparent; border-top: 0; border-bottom: 4px solid #111; }
.psecs table { width: 229px; margin: 0 0 4px 18px; border-collapse: collapse; table-layout: fixed; }
.psecs th, .psecs td { border: 1px solid #888; border-top: 0; padding: 0 0 0 2px; font-weight: 400; text-align: left; line-height: 18px; height: 19px; white-space: nowrap; }
.psecs th { width: 103px; padding-left: 4px; }
.psecs .w { background: #fff; }
.csw { display: inline-block; width: 10px; height: 10px; border: 1px solid #111; margin: 0 6px 0 1px; vertical-align: -1px; }
.pl { display: inline-block; width: 52px; border-top: 1px solid #111; margin: 0 5px 0 3px; vertical-align: 4px; }

.view { flex: 1; display: flex; flex-direction: column; min-width: 0; margin-bottom: 2px; }
.canvas { flex: 1; position: relative; background: #22262f; overflow: hidden; }
.drawing { position: absolute; left: 0; top: 0; }
.vlabel { position: absolute; left: 5px; top: 5px; color: #fff; font: 11px/16px "Open Sans", sans-serif; }
.mdi { position: absolute; right: 10px; top: 8px; }
.cube { position: absolute; right: 13px; top: 36px; width: 96px; height: 96px; display: grid; place-items: center; grid-template: 14px 1fr 14px / 14px 1fr 14px; font: 700 14px/14px "Liberation Sans", sans-serif; color: #c4c5c9; }
.cube::before { content: ""; position: absolute; left: 4px; top: 4px; width: 88px; height: 88px; border: 10px solid #4a4d54; border-radius: 50%; }
.cube span, .cube button { position: relative; }
.cube .n { grid-area: 1 / 2; } .cube .w { grid-area: 2 / 1; } .cube .e { grid-area: 2 / 3; } .cube .s { grid-area: 3 / 2; }
.cube button { grid-area: 2 / 2; width: 38px; height: 38px; background: #a2a2a7; border: 6px solid #b0b0b4; font: 700 10px/20px "Open Sans", sans-serif; color: #444; }
.wcs { position: absolute; right: 38px; top: 149px; width: 48px; height: 17px; border-radius: 4px; background: #8f9096; border: 1px solid #a6a7ac; font: 11px/14px "Liberation Sans", sans-serif; text-align: left; padding-left: 4px; color: #555; }
.navbar { position: absolute; right: 3px; top: 192px; border-radius: 4px; background: #66686c; }
.cmd { position: absolute; left: 50%; bottom: 1px; width: 286px; height: 26px; transform: translateX(-50%); display: flex; background: #4e4e52; border-radius: 3px; overflow: hidden; }
.cmd .grip { width: 5px; margin: 4px 0 4px 4px; border-left: 2px dotted #aaa; border-right: 2px dotted #aaa; }
.cmd button { width: 22px; display: grid; place-items: center; }
.cmd label { flex: 1; display: flex; align-items: center; gap: 9px; background: #b9b9bb; padding: 0 4px 0 5px; }
.cmd input { flex: 1; min-width: 0; font: 700 12px/16px "Liberation Mono", monospace; color: #222; }
.ltabs { display: flex; height: 16px; background: #f0f0f0; padding-left: 2px; font: 11px/15px "Liberation Sans", sans-serif; color: #111; }
.nv { width: 15px; border-right: 1px solid #999; }
.nv svg { width: 10px; height: 10px; margin: auto; fill: #555; stroke: #555; }
.lt { position: relative; padding: 0 11px 0 5px; height: 15px; }
.lt::after { content: ""; position: absolute; right: 3px; top: 0; height: 15px; border-right: 1px solid #444; transform: skewX(-20deg); }
.lt.model { background: #22262f; color: #fff; padding: 0 10px 0 11px; clip-path: polygon(0 0, 100% 0, 92% 100%, 8% 100%); }

.status { display: flex; height: 22px; border-top: 1px solid #222; border-bottom: 2px solid #ddd; background: linear-gradient(#a2a2a2, #858585); font: 11px/19px "Liberation Sans", sans-serif; color: #111; }
.status output { width: 178px; padding-left: 12px; white-space: nowrap; }
.sbtns { display: flex; }
.sbtns button { width: 22px; border-right: 1px solid #555; background: linear-gradient(#c4c4c4, #999); display: flex; align-items: center; justify-content: center; }
.sbtns .on { background: #b7d9ec; }
.sbtns button > svg:not([width]) { width: 20px; height: 18px; fill: none; stroke: #333; }
.right { margin-left: auto; padding-right: 1px; }
.sbtns .txt { width: auto; padding: 0 2px; gap: 3px; }
.sbtns .g { margin-left: 8px; }
.sbtns .tray { width: 46px; border: 1px solid #444; }
.sbtns .tray svg:not([width]) { width: 44px; }
.sbtns .slim { width: 16px; }
.sbtns .slim svg:not([width]) { width: 10px; }

.mark { position: absolute; right: 2px; bottom: 16px; padding: 4px 0 0 3px; width: 60px; display: grid; grid-template-columns: repeat(4, 12px); gap: 2px; background: rgba(90,90,90,.35); }
.mark i { height: 12px; border-radius: 3px; background: #666; }
.mark .x { background: none; } .mark .b { background: #aaa; } .mark .c { background: #fff; }

.dialog { position: absolute; left: 209px; top: 49px; width: 504px; height: 544px; display: flex; flex-direction: column; border: 1px solid #33394a; border-radius: 7px; box-shadow: 0 0 9px 2px rgba(0,0,0,.6); font: 11px/16px "Liberation Sans", sans-serif; color: #000; }
.dtitle { height: 28px; display: flex; align-items: center; padding: 0 9px; gap: 5px; background: linear-gradient(90deg, rgba(212,218,230,.65), rgba(160,180,204,.65)); border-radius: 6px 6px 0 0; font: 12px/16px "Open Sans", sans-serif; color: #222; }
.dtitle span { flex: 1; padding-bottom: 2px; }
.dtitle button { width: 44px; height: 17px; margin: 0 0 8px; display: grid; place-items: center; background: linear-gradient(#dca09c, #c2443e 50%, #c8605a); border: 1px solid #7b2a2a; border-top: 0; border-radius: 0 0 4px 4px; }
.client { flex: 1; border: 6px solid rgba(150,165,200,.55); border-top: 0; border-bottom-width: 5px; border-radius: 0 0 6px 6px; background: #efedec; background-clip: padding-box; padding: 10px 11px 0 14px; opacity: .8; box-shadow: inset 1px 0 #333f60, inset -1px -1px #333f60; }
.list { height: 282px; border: 1px solid #555; background: #faf8f6; display: flex; flex-direction: column; justify-content: space-between; margin-bottom: 6px; }
.list table { border-collapse: collapse; margin: 1px 0 0 6px; }
.list td { padding: 0; height: 17px; line-height: 17px; }
.list td:first-child { width: 164px; }
.list td:nth-child(2) { width: 17px; }
.hs { display: flex; height: 17px; align-items: center; justify-content: space-between; padding: 0 6px; gap: 7px; background: #eee; }
.hs span { flex: 1; height: 15px; margin-right: 98px; border: 1px solid #888; border-radius: 2px; background: linear-gradient(#eee, #aaa); text-align: center; font-size: 8px; line-height: 14px; }
.cols { display: flex; gap: 9px; }
.left { width: 225px; padding: 0 5px 4px 4px; border: 1px solid #ddd; border-top: 0; display: flex; flex-direction: column; height: 174px; }
.left > label { line-height: 16px; padding-left: 2px; margin-bottom: 2px; }
.r { display: flex; align-items: center; }
.r button, .full { height: 21px; line-height: 19px; border: 1px solid #555; border-radius: 3px; background: linear-gradient(#f2f0f0, #e4e2e2 50%, #cfcdcd 50%, #d6d4d4); white-space: nowrap; }
.dialog select { height: 21px; border: 1px solid #666; border-radius: 2px; padding: 0 3px; }
.dialog input { height: 21px; border: 1px solid #bbb; background: #faf8f8; padding: 0 3px; min-width: 0; }
.a { gap: 8px; align-items: flex-start; margin-bottom: 9px; }
.a select { width: 142px; }
.r button:disabled { width: 63px; color: #888; border-color: #aaa; }
.v { margin-bottom: 1px; }
.v label { width: 23px; padding-left: 2px; color: #888; }
.v select { width: 52px; margin-right: 10px; }
.v input { flex: 1; }
.dialog .dis select { border-color: #aaa; background: conic-gradient(from -36deg at 50% 100%, #999 72deg, transparent 0) right 4px center / 8px 4px no-repeat, #efedec; }
.dialog .dis input { background: #eae9ee; border-color: #999; }
.pair { padding: 6px 0 7px 23px; gap: 44px; }
.pair button { width: 64px; }
.left .full { width: 212px; }
.rightc { flex: 1; min-width: 0; padding: 7px 5px 0 4px; }
.tri { justify-content: space-between; }
.tri button { width: 63px; }
.named { margin: 7px 0 12px -6px; padding: 0 4px 8px 12px; border: 1px solid #ddd; border-top: 0; }
.named > span { margin-left: -6px; display: block; margin-bottom: 4px; }
.cur { justify-content: space-between; margin-bottom: 7px; }
.cur select { width: 152px; }
.sav { gap: 18px; margin-bottom: 6px; }
.sav button { width: 63px; }
.sav input { flex: 1; border-color: #ddd; }
.named .full { width: 100%; }
.r .def { background: linear-gradient(#b9d6ea, #7fb2d8); border: 1px solid #1c3c58; outline: 1px dotted #333; outline-offset: -3px; }
.pointer { position: absolute; left: 500px; top: 539px; }
```
